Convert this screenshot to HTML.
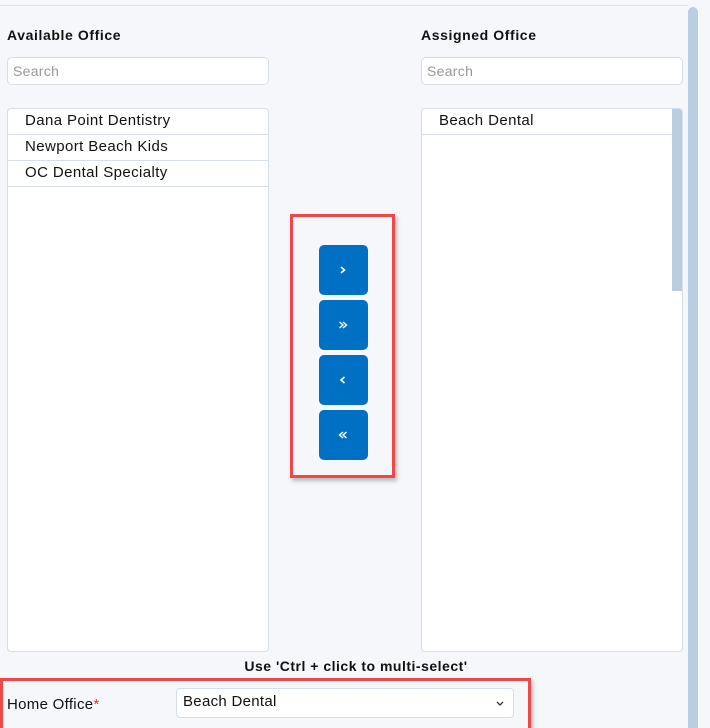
<!DOCTYPE html>
<html><head><style>
html,body{margin:0;width:710px;height:728px;overflow:hidden;}
body{background:#f5f7fa;position:relative;font-family:"Liberation Sans",sans-serif;}
.abs{position:absolute;}
.lbl{font-weight:bold;font-size:14px;color:#111;letter-spacing:0.6px;}
.search{background:#fff;border:1px solid #d8dee6;border-radius:5px;height:28px;box-sizing:border-box;font-size:14px;color:#999;padding:5px 5px;letter-spacing:0.3px;}
.list{background:#fff;border:1px solid #d8dee6;border-radius:4px;box-sizing:border-box;overflow:hidden;}
.item{height:26px;border-bottom:1px solid #d8dee6;font-size:15px;color:#111;padding:3px 0 0 17px;box-sizing:border-box;letter-spacing:0.4px;}
.btn{left:319px;width:49px;height:50px;background:#0070c4;border-radius:5px;}
.btn svg{position:absolute;left:19px;top:20px;}
</style></head><body>
<div class="abs" style="left:0;top:5px;width:688px;height:1px;background:#dde3ea"></div>
<div class="abs" style="left:688px;top:7px;width:10px;height:721px;background:#b9cfe1;border-radius:5px 5px 0 0"></div>
<div class="abs lbl" style="left:7px;top:27px">Available Office</div>
<div class="abs lbl" style="left:421px;top:27px">Assigned Office</div>
<div class="abs search" style="left:7px;top:57px;width:262px">Search</div>
<div class="abs search" style="left:421px;top:57px;width:262px">Search</div>
<div class="abs list" style="left:7px;top:108px;width:262px;height:544px">
<div class="item">Dana Point Dentistry</div><div class="item">Newport Beach Kids</div><div class="item">OC Dental Specialty</div></div>
<div class="abs list" style="left:421px;top:108px;width:262px;height:544px">
<div class="item">Beach Dental</div>
<div class="abs" style="right:0;top:0;width:10px;height:182px;background:#b9cfe1"></div></div>
<div class="abs" style="left:290px;top:214px;width:105px;height:264px;border:3px solid #f04848;box-sizing:border-box;box-shadow:2px 3px 4px rgba(0,0,0,.25)"></div>
<div class="abs btn" style="top:245px"><svg width="10" height="10"><path d="M3 2 L6.5 5 L3 8" stroke="#fff" stroke-width="1.6" fill="none"/></svg></div>
<div class="abs btn" style="top:300px"><svg width="10" height="10"><path d="M1.5 2 L5 5 L1.5 8 M5 2 L8.5 5 L5 8" stroke="#fff" stroke-width="1.4" fill="none"/></svg></div>
<div class="abs btn" style="top:355px"><svg width="10" height="10"><path d="M6.5 2 L3 5 L6.5 8" stroke="#fff" stroke-width="1.6" fill="none"/></svg></div>
<div class="abs btn" style="top:410px"><svg width="10" height="10"><path d="M5 2 L1.5 5 L5 8 M8.5 2 L5 5 L8.5 8" stroke="#fff" stroke-width="1.4" fill="none"/></svg></div>
<div class="abs" style="left:0;top:658px;width:712px;text-align:center;font-size:14px;font-weight:bold;color:#111;letter-spacing:0.5px">Use 'Ctrl + click to multi-select'</div>
<div class="abs" style="left:0;top:678px;width:531px;height:60px;border:3px solid #f04848;box-sizing:border-box;box-shadow:2px 3px 4px rgba(0,0,0,.25)"></div>
<div class="abs" style="left:7px;top:696px;font-size:15px;color:#111;letter-spacing:0.3px">Home Office<span style="color:#e03030">*</span></div>
<div class="abs" style="left:176px;top:688px;width:338px;height:30px;background:#fff;border:1px solid #d8dee6;border-radius:4px;box-sizing:border-box;font-size:15px;color:#111;padding:4px 6px;letter-spacing:0.3px">Beach Dental<svg style="position:absolute;right:9px;top:12px" width="8" height="6"><path d="M1 1 L4 4 L7 1" stroke="#333" stroke-width="1.3" fill="none"/></svg></div>
</body></html>
